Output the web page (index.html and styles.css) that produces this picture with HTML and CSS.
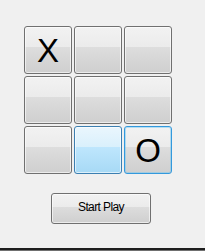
FILE: index.html
```html
<!DOCTYPE html>
<html lang="en">
<head>
    <meta charset="UTF-8">
    <title>Tic Tac Toe</title>
    <link rel="stylesheet" href="styles.css">
</head>
<body>
    <div class="form">
        <div class="board">
            <button class="cell">X</button>
            <button class="cell"></button>
            <button class="cell"></button>
            <button class="cell"></button>
            <button class="cell"></button>
            <button class="cell"></button>
            <button class="cell"></button>
            <button class="cell hover"></button>
            <button class="cell focus">O</button>
        </div>
        <button class="start-btn">Start Play</button>
    </div>
</body>
</html>
```

FILE: styles.css
```css
* {
    margin: 0;
    padding: 0;
    box-sizing: border-box;
}

body {
    background: #f0f0f0;
    font-family: 'Liberation Sans', Arial, sans-serif;
    width: 205px;
    height: 251px;
    overflow: hidden;
}

.form {
    height: 250px;
    border-bottom: 2px solid #1e1e1e;
    box-shadow: 0 1px 0 #707070;
    padding: 26px 0 0 24px;
}

/* Game board */
.board {
    display: grid;
    grid-template-columns: repeat(3, 48px);
    grid-auto-rows: 48px;
    gap: 2px;
}

.cell,
.start-btn {
    border: 1px solid #707070;
    border-radius: 3px;
    background: linear-gradient(#f2f2f2 0%, #ebebeb 44%, #dddddd 44%, #cfcfcf 100%);
    color: #000;
    font-family: inherit;
    box-shadow: inset 0 0 0 1px rgba(255, 255, 255, 0.6);
}

.cell {
    font-size: 33px;
    line-height: 1;
    padding-top: 1px;
}

.cell.hover {
    border-color: #3c7fb1;
    background: linear-gradient(#eaf6fd 0%, #d9f0fc 44%, #bee6fd 44%, #a7d9f5 100%);
}

.cell.focus {
    border-color: #3399dd;
    box-shadow: inset 0 0 0 1px rgba(120, 200, 240, 0.5);
}

.start-btn {
    display: block;
    width: 100px;
    height: 31px;
    margin: 19px 0 0 27px;
    padding-bottom: 3px;
    font-size: 12px;
    letter-spacing: -0.6px;
}
```
